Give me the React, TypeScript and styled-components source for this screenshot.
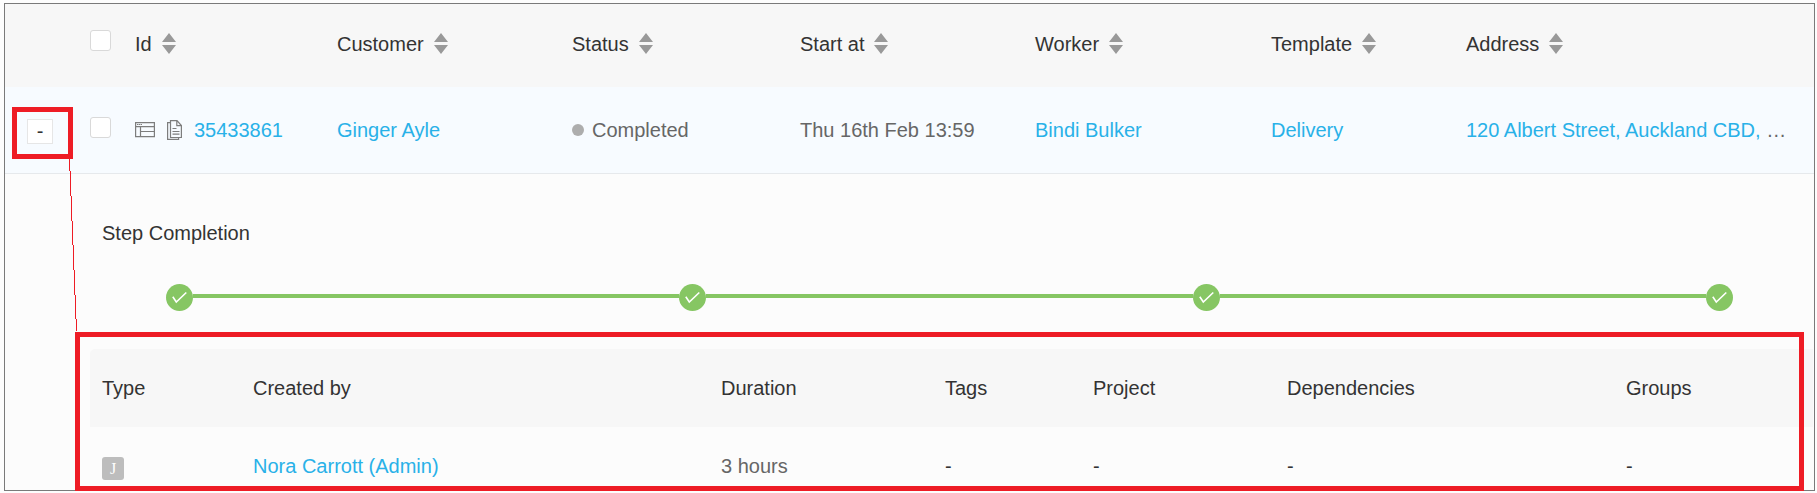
import React from "react";
import styled, { createGlobalStyle } from "styled-components";

const GlobalStyle = createGlobalStyle`
  * { box-sizing: border-box; }
  body {
    margin: 0;
    background: #fdfdfd;
    color: #333;
    font-family: "Liberation Sans", Arial, sans-serif;
    font-size: 20px;
    line-height: 24px;
  }
`;

const Page = styled.main`
  padding: 3px 2px 2px 4px;
`;

const Frame = styled.section`
  border: 1px solid #7a7a7a;
  background: #fcfcfc;
`;

const JobTable = styled.table`
  width: 100%;
  table-layout: fixed;
  border-collapse: separate;
  border-spacing: 0;
`;

const HeadCell = styled.th`
  height: 83px;
  padding: 0 0 4px;
  background: #f7f7f7;
  font-weight: normal;
  text-align: left;
  white-space: nowrap;
`;

const Cell = styled.td`
  height: 87px;
  padding: 0;
  background: #f7fbff;
  border-bottom: 1px solid #e6e9ec;
  color: #666;
  white-space: nowrap;
`;

const ExpandCell = styled(Cell)`
  padding: 2px 0 0 22px;
`;

const SortButton = styled.button`
  display: flex;
  align-items: center;
  gap: 10px;
  padding: 0;
  border: 0;
  background: none;
  color: inherit;
  font: inherit;
  cursor: pointer;
`;

const Link = styled.a`
  color: #29b1e8;
  text-decoration: none;
`;

const Checkbox = styled.input`
  appearance: none;
  display: block;
  width: 21px;
  height: 21px;
  margin: 0 0 6px;
  border: 1px solid #d9d9d9;
  border-radius: 3px;
  background: #fff;
`;

const Inline = styled.div<{ $gap: number }>`
  display: flex;
  align-items: center;
  gap: ${(p) => p.$gap}px;
`;

const Dot = styled.span`
  width: 12px;
  height: 12px;
  border-radius: 50%;
  background: #adadad;
`;

const Toggle = styled.div`
  position: relative;
  width: 26px;
`;

const ToggleButton = styled.button`
  display: flex;
  align-items: center;
  justify-content: center;
  width: 26px;
  height: 25px;
  padding: 0;
  border: 1px solid #e6e6e6;
  background: #fff;
  color: #333;
  font: inherit;
  cursor: pointer;
`;

const ToggleHighlight = styled.div`
  position: absolute;
  inset: -12px -20px -15px -15px;
  border: 5px solid #ee1c25;
  pointer-events: none;
`;

const Connector = styled.svg`
  position: absolute;
  z-index: 1;
  top: 100%;
  left: 52px;
  margin-top: 5px;
`;

const Details = styled.div`
  padding: 47px 1px 0 85px;
`;

const Title = styled.h2`
  margin: 0 0 39px 12px;
  font-size: 20px;
  line-height: 24px;
  font-weight: normal;
`;

const Steps = styled.ol`
  display: flex;
  align-items: center;
  margin: 0 80px 38px 76px;
  padding: 0;
  list-style: none;
`;

const Step = styled.li`
  display: flex;
  align-items: flex-start;
  flex: 1;

  &:last-child {
    flex: none;
  }
`;

const StepLine = styled.span`
  flex: 1;
  height: 4px;
  margin-top: 10px;
  background: #86c663;
`;

const DetailPanel = styled.div`
  position: relative;
`;

const PanelHighlight = styled.div`
  position: absolute;
  inset: -17px 9px -1px -15px;
  border: 5px solid #ee1c25;
  pointer-events: none;
`;

const DetailHead = styled(HeadCell)`
  height: 78px;
  padding: 0 0 0 12px;

  &:first-child {
    border-top-left-radius: 5px;
  }
`;

const DetailCell = styled.td<{ $muted?: boolean }>`
  height: 63px;
  padding: 27px 0 10px 12px;
  color: ${(p) => (p.$muted ? "#666" : "#333")};
  vertical-align: top;
  white-space: nowrap;
`;

const TypeBadge = styled.span`
  display: flex;
  align-items: center;
  justify-content: center;
  width: 22px;
  height: 23px;
  margin-top: 3px;
  border-radius: 3px;
  background: #bdbdbd;
  color: #fff;
  font: 16px/23px "Liberation Serif", serif;
`;

const SortIcon = () => (
  <svg width="14" height="21" viewBox="0 0 14 21" fill="#999" aria-hidden="true">
    <path d="M7 0 14 9H0zM7 21 0 12h14z" />
  </svg>
);

const LayoutIcon = () => (
  <svg width="20" height="16" viewBox="0 0 20 16" fill="none" stroke="#7d7d7d" strokeWidth="1.2" aria-hidden="true">
    <path d="M.6.6h18.800v14H.6zM.6 4.600h18.800M5.500 4.600v10M5.500 9.500h14" />
    <path d="M2 2.500h5" strokeWidth="1" strokeDasharray="1.500 .5" />
  </svg>
);

const DocumentsIcon = () => (
  <svg width="15" height="20" viewBox="0 0 15 20" fill="none" stroke="#7d7d7d" strokeWidth="1.2" aria-hidden="true">
    <path d="M3.500.6h6.500l4.400 4.900v12H3.500zM9.800.6v5h4.600" />
    <path d="M3.500 2.600H.6v16.800h11v-2M5.500 8.500H9.500M5.500 11.500h7M5.500 14.200h7" />
  </svg>
);

const StepCheck = () => (
  <svg width="27" height="27" viewBox="0 0 27 27" role="img" aria-label="Step completed">
    <circle cx="13.500" cy="13.500" r="13.500" fill="#86c663" />
    <path d="M6.800 12.800 10.300 18 20.300 8.500" fill="none" stroke="#fff" strokeWidth="1.600" />
  </svg>
);

// Column widths act as proportions of the full table width.
const jobColumns = [85, 45, 202, 235, 228, 235, 236, 195, 348];
const jobHeaders = ["Id", "Customer", "Status", "Start at", "Worker", "Template", "Address"];
const detailColumns = [151, 468, 224, 148, 194, 339, 199];
const detailHeaders = ["Type", "Created by", "Duration", "Tags", "Project", "Dependencies", "Groups"];

const Columns = ({ widths }: { widths: number[] }) => (
  <colgroup>
    {widths.map((width, i) => (
      <col key={i} width={width} />
    ))}
  </colgroup>
);

export default function App() {
  return (
    <Page>
      <GlobalStyle />
      <Frame>
        <JobTable>
          <Columns widths={jobColumns} />
          <thead>
            <tr>
              <HeadCell as="td" />
              <HeadCell>
                <Checkbox type="checkbox" aria-label="Select all jobs" />
              </HeadCell>
              {jobHeaders.map((label) => (
                <HeadCell key={label} scope="col">
                  <SortButton type="button">
                    {label}
                    <SortIcon />
                  </SortButton>
                </HeadCell>
              ))}
            </tr>
          </thead>
          <tbody>
            <tr>
              <ExpandCell>
                <Toggle>
                  <ToggleButton type="button" aria-expanded="true" aria-label="Collapse job details">
                    -
                  </ToggleButton>
                  <ToggleHighlight>
                    <Connector width="8" height="172" viewBox="0 0 8 172" shapeRendering="crispEdges">
                      <path d="M.5 0 7.500 172" stroke="#ee1c25" />
                    </Connector>
                  </ToggleHighlight>
                </Toggle>
              </ExpandCell>
              <Cell>
                <Checkbox type="checkbox" aria-label="Select job 35433861" />
              </Cell>
              <Cell>
                <Inline $gap={12}>
                  <LayoutIcon />
                  <DocumentsIcon />
                  <Link href="#job">35433861</Link>
                </Inline>
              </Cell>
              <Cell>
                <Link href="#customer">Ginger Ayle</Link>
              </Cell>
              <Cell>
                <Inline $gap={8}>
                  <Dot />
                  Completed
                </Inline>
              </Cell>
              <Cell>Thu 16th Feb 13:59</Cell>
              <Cell>
                <Link href="#worker">Bindi Bulker</Link>
              </Cell>
              <Cell>
                <Link href="#template">Delivery</Link>
              </Cell>
              <Cell>
                <Link href="#address">120 Albert Street, Auckland CBD,</Link> …
              </Cell>
            </tr>
          </tbody>
        </JobTable>
        <Details>
          <Title>Step Completion</Title>
          <Steps>
            {[1, 2, 3, 4].map((step) => (
              <Step key={step}>
                <StepCheck />
                {step < 4 && <StepLine />}
              </Step>
            ))}
          </Steps>
          <DetailPanel>
            <JobTable>
              <Columns widths={detailColumns} />
              <thead>
                <tr>
                  {detailHeaders.map((label) => (
                    <DetailHead key={label} scope="col">
                      {label}
                    </DetailHead>
                  ))}
                </tr>
              </thead>
              <tbody>
                <tr>
                  <DetailCell>
                    <TypeBadge>J</TypeBadge>
                  </DetailCell>
                  <DetailCell>
                    <Link href="#creator">Nora Carrott (Admin)</Link>
                  </DetailCell>
                  <DetailCell $muted>3 hours</DetailCell>
                  <DetailCell>-</DetailCell>
                  <DetailCell>-</DetailCell>
                  <DetailCell>-</DetailCell>
                  <DetailCell>-</DetailCell>
                </tr>
              </tbody>
            </JobTable>
            <PanelHighlight />
          </DetailPanel>
        </Details>
      </Frame>
    </Page>
  );
}
